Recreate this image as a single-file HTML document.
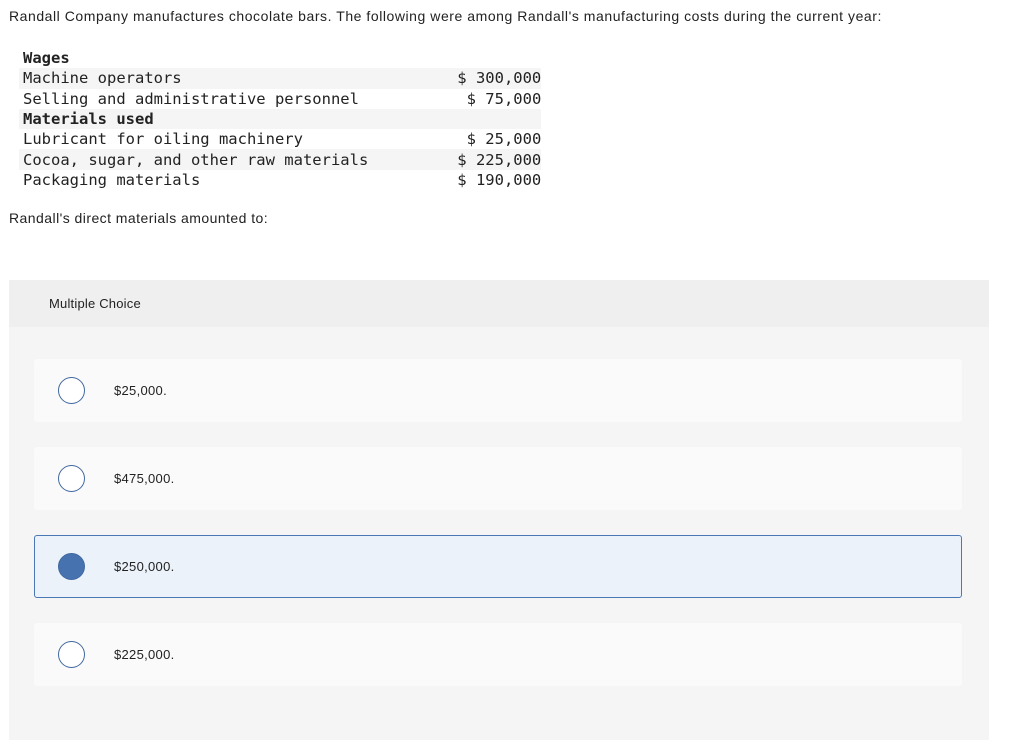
<!DOCTYPE html>
<html><head><style>
body{margin:0;background:#fff;font-family:"Liberation Sans",Arial,sans-serif;color:#222;width:1024px;height:745px;overflow:hidden;position:relative}
.q{position:absolute;left:9px;top:8px;font-size:14px;letter-spacing:0.55px}
table{position:absolute;left:19px;top:48px;border-collapse:collapse;font-family:"DejaVu Sans Mono",monospace;font-size:15.5px;color:#222}
td{height:20.3px;padding:0 4px;line-height:20px;white-space:pre}
td.r{text-align:right;padding-left:85px;padding-right:0}
tr.s td{background:#f5f5f5}
b{font-weight:bold}
.q2{position:absolute;left:9px;top:210px;font-size:14px;letter-spacing:0.45px}
.panel{position:absolute;left:9px;top:280px;width:980px;height:460px;background:#f5f5f5}
.hd{height:47px;background:#efefef;font-size:13px;line-height:47px;padding-left:40px;letter-spacing:0.2px}
.opt{position:absolute;left:25px;width:928px;height:63px;background:#fafafa;border-radius:3px;font-size:13px;letter-spacing:0.3px}
.opt.sel{background:#ebf2fa;border:1px solid #4a78b4;width:926px;height:61px}
.rad{position:absolute;left:24px;top:18px;border:1.5px solid #41689f;border-radius:50%;background:#fff;box-sizing:border-box;width:27px;height:27px}
.sel .rad{background:#4673b0;left:23px;top:17px}
.t{position:absolute;left:80px;top:24px}
.sel .t{left:79px;top:23px}
</style></head><body>
<div class="q">Randall Company manufactures chocolate bars. The following were among Randall's manufacturing costs during the current year:</div>
<table>
<tr><td><b>Wages</b></td><td class="r"></td></tr>
<tr class="s"><td>Machine operators</td><td class="r">$ 300,000</td></tr>
<tr><td>Selling and administrative personnel</td><td class="r">$ 75,000</td></tr>
<tr class="s"><td><b>Materials used</b></td><td class="r"></td></tr>
<tr><td>Lubricant for oiling machinery</td><td class="r">$ 25,000</td></tr>
<tr class="s"><td>Cocoa, sugar, and other raw materials</td><td class="r">$ 225,000</td></tr>
<tr><td>Packaging materials</td><td class="r">$ 190,000</td></tr>
</table>
<div class="q2">Randall's direct materials amounted to:</div>
<div class="panel">
<div class="hd">Multiple Choice</div>
<div class="opt" style="top:79px"><div class="rad"></div><div class="t">$25,000.</div></div>
<div class="opt" style="top:167px"><div class="rad"></div><div class="t">$475,000.</div></div>
<div class="opt sel" style="top:255px"><div class="rad"></div><div class="t">$250,000.</div></div>
<div class="opt" style="top:343px"><div class="rad"></div><div class="t">$225,000.</div></div>
</div>
</body></html>
